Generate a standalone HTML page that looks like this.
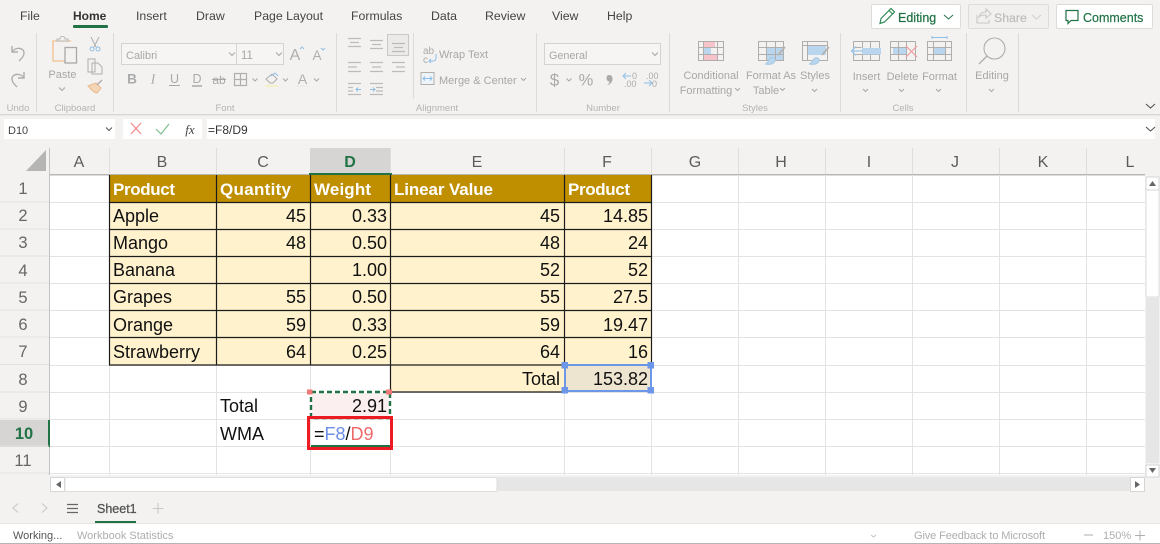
<!DOCTYPE html>
<html><head><meta charset="utf-8"><style>
html,body{margin:0;padding:0;width:1160px;height:544px;overflow:hidden;background:#fff}
svg{display:block;filter:blur(.35px)}
text{font-family:"Liberation Sans",sans-serif}
.r{font-size:11px;fill:#a9a7a5}
.g{font-size:9.5px;fill:#b5b3b1}
.t{font-size:12.3px;fill:#444}
.c{font-size:18px;fill:#111}
.h{font-size:17px;fill:#fff;font-weight:bold}
.ch{font-size:16px;fill:#5c5c5c;text-anchor:middle}
.rh{font-size:16.5px;fill:#666;text-anchor:middle}
.e{text-anchor:end}
.l{stroke:#b9b8b6;stroke-width:1;fill:none}
.i{stroke:#b0aeac;stroke-width:1;fill:none}
.a{stroke:#bdbbb9;stroke-width:1.200;fill:none}
.b{stroke:#8fbfe6;stroke-width:1;fill:none}
.v{stroke:#a9a7a5;stroke-width:1;fill:none}
</style></head><body>
<svg width="1160" height="544" viewBox="0 0 1160 544" xmlns="http://www.w3.org/2000/svg">
<rect width="1160" height="544" fill="#f3f2f1"/>

<!-- tabs -->
<text class="t" x="20" y="20">File</text>
<text class="t" x="73" y="20" style="fill:#333;font-weight:bold;font-size:12px">Home</text>
<rect x="73" y="25" width="35" height="3" rx="1" fill="#217346"/>
<text class="t" x="136" y="20">Insert</text>
<text class="t" x="196" y="20">Draw</text>
<text class="t" x="254" y="20">Page Layout</text>
<text class="t" x="351" y="20">Formulas</text>
<text class="t" x="431" y="20">Data</text>
<text class="t" x="485" y="20">Review</text>
<text class="t" x="552" y="20">View</text>
<text class="t" x="607" y="20">Help</text>

<!-- top buttons -->
<rect x="871.500" y="4.500" width="89" height="24" rx="1.500" fill="#fff" stroke="#dcdbda"/>
<path d="M880 23.500l1-5 10-10 3.500 3.500-10 10zM889 10.500l3.500 3.500" fill="none" stroke="#2e8b57" stroke-width="1.200"/>
<text x="898" y="22" style="font-size:12.500px;fill:#217346;stroke:#217346;stroke-width:.25">Editing</text>
<path d="M944 15l4.500 4 4.500-4" fill="none" stroke="#217346"/>
<rect x="968.500" y="4.500" width="80" height="24" rx="1.500" fill="#f1f0ef" stroke="#dddcdb"/>
<path d="M977 15v8h12v-3M979 17c1-4 4-5 7-5v-3l5 5-5 4v-3c-3 0-5 0-7 2z" fill="none" stroke="#c9c8c6" stroke-width="1.100"/>
<text x="994" y="22" style="font-size:12.300px;fill:#bdbcba;stroke:#bdbcba;stroke-width:.2">Share</text>
<path d="M1032 15l4.500 4 4.500-4" fill="none" stroke="#cfcecd"/>
<rect x="1056.500" y="4.500" width="96" height="24" rx="1.500" fill="#fff" stroke="#dcdbda"/>
<path d="M1066 10.500h12v10h-7l-3 3v-3h-2z" fill="none" stroke="#217346" stroke-width="1.200"/>
<text x="1083" y="22" style="font-size:12.500px;fill:#217346;stroke:#217346;stroke-width:.2">Comments</text>

<!-- group separators -->
<path class="l" style="stroke:#dcdbd9" d="M36.500 33v79M113.500 33v79M336.500 33v79M413.500 33v66M536.500 33v79M669.500 33v79M840.500 33v79M966.500 33v79M1018.500 33v79"/>

<!-- undo redo -->
<path class="i" style="stroke-width:1.400" d="M12 46v6h6M12 52c3-5 12-5 12 1 0 3-2 5-5 8"/>
<path class="i" style="stroke-width:1.400" d="M24 72v6h-6M24 78c-3-5-12-5-12 1 0 3 2 5 5 8"/>
<text class="g" x="18" y="111" text-anchor="middle">Undo</text>

<!-- clipboard -->
<path d="M71 41h-18v20h12" fill="none" stroke="#f1c99f" stroke-width="1.600"/>
<path d="M57 41v-2h3c0-3.500 5-3.500 5 0h3v2z" fill="#f3f2f1" stroke="#b9b8b6"/>
<rect x="65" y="47.500" width="11.500" height="15.500" fill="#f3f2f1" stroke="#aaa8a6" stroke-width="1.300"/>
<text class="r" x="62.500" y="78" text-anchor="middle">Paste</text>
<path class="v" d="M59 87.500l3 3 3-3"/>
<path class="i" d="M91 37l5 10M99 37l-5 10"/>
<circle class="b" cx="92" cy="49" r="2"/><circle class="b" cx="98" cy="49" r="2"/>
<path class="i" d="M88 59h7v13h-7zM92 73v-10h6l4 4v7h-10z"/>
<path d="M88 86l8-3 5 5-4 5c-3 0-6-4-9-7z" fill="#f4d5b5" stroke="#eab98c"/>
<path class="i" d="M97 85l5-5" style="stroke-width:1.500"/>
<text class="g" x="75" y="111" text-anchor="middle">Clipboard</text>

<!-- font -->
<rect x="121.500" y="43.500" width="162" height="21" fill="#f6f5f4" stroke="#d4d3d1"/>
<path d="M236.500 44v20" stroke="#d4d3d1"/>
<text class="r" x="126" y="59" style="font-size:11px">Calibri</text>
<text class="r" x="241" y="59" style="font-size:11.500px">11</text>
<path class="v" d="M229 52.500l3 3 3-3M276 52.500l3 3 3-3"/>
<text x="295" y="60" text-anchor="middle" style="font-size:16px;fill:#b0aeac">A</text>
<path class="b" d="M300 49l2-2 2 2"/>
<text x="317" y="60" text-anchor="middle" style="font-size:13.500px;fill:#b0aeac">A</text>
<path class="b" d="M321 48l2 2 2-2"/>
<text x="132" y="83.500" text-anchor="middle" style="font-size:13.500px;font-weight:bold;fill:#aaa">B</text>
<text x="153" y="83.500" text-anchor="middle" style="font-size:13.500px;font-style:italic;font-family:'Liberation Serif';fill:#aaa">I</text>
<text x="174.500" y="83" text-anchor="middle" style="font-size:12.500px;fill:#aaa">U</text><path class="v" d="M169 85.500h11"/>
<text x="197" y="83" text-anchor="middle" style="font-size:12.500px;fill:#aaa">D</text><path d="M192 86h10" stroke="#bbb" stroke-width="2"/>
<text x="219" y="84" text-anchor="middle" style="font-size:12px;fill:#aaa">ab</text><path class="v" d="M212 79.500h14"/>
<path class="i" style="stroke-width:1.200" d="M234.500 73.500h12v12h-12zM240.500 73.500v12M234.500 79.500h12"/>
<path class="v" d="M252.500 78.500l2.500 2.500 2.500-2.500M283 78.500l2.500 2.500 2.500-2.500M314 78.500l2.500 2.500 2.500-2.500"/>
<path class="i" d="M266 79l6-5 5 5-4 4h-3z"/>
<path class="b" d="M271 76l4-3 3 3"/>
<path d="M265 86h13" stroke="#f6efc5" stroke-width="2"/>
<text x="302.500" y="84" text-anchor="middle" style="font-size:14px;fill:#b0aeac">A</text>
<path d="M295 86h14" stroke="#ededeb" stroke-width="2"/>
<text class="g" x="225" y="111" text-anchor="middle">Font</text>

<!-- alignment -->
<rect x="387.500" y="34.500" width="21" height="21" fill="#ebeae8" stroke="#c9c8c6"/>
<path class="a" d="M348 38.500h13M350 42.500h9M348 46.500h13M370 40.500h13M372 44.500h9M370 48.500h13M392 43.500h13M394 47.500h9M392 51.500h13M348 62.500h13M348 67h9M348 71.500h13M370 62.500h13M372 67h9M370 71.500h13M392 62.500h13M396 67h9M392 71.500h13M348 83.500h13M348 94.500h13M370 83.500h13M370 94.500h13M348 87.500h5M348 91h5M376 87.500h7M376 91h7"/>
<path class="b" d="M361 89.500h-5M358 87.500l-2 2 2 2M370 89.500h5M373 87.500l2 2-2 2"/>
<text x="423" y="54" style="font-size:10px;fill:#aaa">ab</text>
<text x="423" y="63" style="font-size:10px;fill:#aaa">c</text>
<path class="b" d="M436 54v4c0 2-1 3-3 3h-4M431 59l-2 2 2 2"/>
<text class="r" x="439" y="58">Wrap Text</text>
<rect x="421" y="72.500" width="13" height="12" fill="#eef4fa" stroke="#b0aeac"/>
<path class="b" d="M423 78.500h9M425 76.500l-2 2 2 2M430 76.500l2 2-2 2"/>
<text class="r" x="439" y="84">Merge &amp; Center</text>
<path class="v" d="M521 78l2.500 2.500 2.500-2.500"/>
<text class="g" x="437" y="111" text-anchor="middle">Alignment</text>

<!-- number -->
<rect x="544.500" y="43.500" width="116" height="21" fill="#f6f5f4" stroke="#d4d3d1"/>
<text class="r" x="549" y="59" style="font-size:10.800px">General</text>
<path class="v" d="M652 52.500l3 3 3-3"/>
<text x="554.500" y="85.500" text-anchor="middle" style="font-size:17px;fill:#aaa">$</text>
<path class="v" d="M566.500 78.500l2.500 2.500 2.500-2.500"/>
<text x="586" y="85.500" text-anchor="middle" style="font-size:16.500px;fill:#aaa">%</text>
<path d="M609 75c3 0 3.500 2 3.500 4 0 3-2.500 5.500-5.500 6.500 1.500-1.500 2.500-2.500 2.500-4-1.500 0-3-1-3-3.200 0-2 1-3.300 2.500-3.300z" fill="#aaa"/>
<text x="632" y="79" style="font-size:9px;fill:#aaa">0</text>
<text x="624" y="87" style="font-size:9px;fill:#aaa">.00</text>
<path class="b" d="M631 76h-8M626 73l-3 3 3 3"/>
<text x="646" y="79" style="font-size:9px;fill:#aaa">.00</text>
<text x="652" y="87" style="font-size:9px;fill:#aaa">0</text>
<path class="b" d="M644 83h8M649 80l3 3-3 3"/>
<text class="g" x="603" y="111" text-anchor="middle">Number</text>

<!-- styles -->
<rect x="703" y="41" width="12" height="6.500" fill="#f6c3ca"/><rect x="703" y="47.500" width="8" height="6.500" fill="#b9d6ee"/><rect x="703" y="54" width="14" height="6.500" fill="#f6c3ca"/>
<path class="i" d="M698.500 41.500h25v19h-25zM698.500 47.500h25M698.500 54.500h25M703.500 41.500v19M717.500 41.500v19"/>
<text class="r" x="711" y="79" text-anchor="middle">Conditional</text>
<text class="r" x="706" y="94" text-anchor="middle">Formatting</text>
<path class="v" d="M735 88l2.500 2.500 2.500-2.500"/>
<rect x="766" y="47.500" width="17" height="13" fill="#b9d6ee"/>
<path class="i" d="M758.500 41.500h25v19h-25zM758.500 47.500h25M758.500 54.500h25M766.500 41.500v19M775.500 41.500v19"/>
<path d="M785 47l-7 8" stroke="#b5b3b1" stroke-width="1.800"/><path d="M765 64c3 0 3-4 6-6 3-1 5 1 4 3-1 3-5 4-10 3z" fill="#b9d6ee" stroke="#a7c8e2"/>
<text class="r" x="771" y="79" text-anchor="middle">Format As</text>
<text class="r" x="766" y="94" text-anchor="middle">Table</text>
<path class="v" d="M780 88l2.500 2.500 2.500-2.500"/>
<rect x="807" y="45" width="19" height="10" fill="#b9d6ee"/>
<path class="i" d="M802.500 41.500h25v19h-25zM802.500 45.500h25M807.500 41.500v19"/>
<path d="M829 47l-7 8" stroke="#b5b3b1" stroke-width="1.800"/><path d="M809 64c3 0 3-4 6-6 3-1 5 1 4 3-1 3-5 4-10 3z" fill="#b9d6ee" stroke="#a7c8e2"/>
<text class="r" x="815" y="79" text-anchor="middle">Styles</text>
<path class="v" d="M812 89l2.500 2.500 2.500-2.500"/>
<text class="g" x="755" y="111" text-anchor="middle">Styles</text>

<!-- cells -->
<path class="i" d="M853.500 41.500h26v19h-26zM853.500 47.500h8M853.500 54.500h26M862.500 41.500v19M870.500 41.500v19"/>
<rect x="862" y="48" width="19" height="6.500" fill="#b9d6ee"/>
<path d="M852 51h11M856 46.500l-4.500 4.500 4.500 4.500" fill="none" stroke="#9cc7ea" stroke-width="1.300"/>
<text class="r" x="866.500" y="80" text-anchor="middle">Insert</text>
<path class="v" d="M863 89l2.500 2.500 2.500-2.500"/>
<rect x="893" y="48" width="14" height="6" fill="#b9d6ee"/>
<path class="i" d="M890.500 41.500h25v19h-25zM890.500 47.500h16M890.500 54.500h16M898.500 41.500v19M906.500 41.500v19"/>
<path d="M906 46l11 11M917 46l-11 11" stroke="#f09a9a" stroke-width="1.200"/>
<text class="r" x="902.500" y="80" text-anchor="middle">Delete</text>
<path class="v" d="M899 89l2.500 2.500 2.500-2.500"/>
<rect x="933" y="47.500" width="13" height="7" fill="#b9d6ee"/>
<path class="i" d="M927.500 41.500h24v19h-24zM927.500 47.500h24M927.500 54.500h24M933.500 41.500v19M945.500 41.500v19"/>
<path class="b" d="M932 37.500h15M932 36v3M947 36v3"/>
<text class="r" x="939.500" y="80" text-anchor="middle">Format</text>
<path class="v" d="M936 89l2.500 2.500 2.500-2.500"/>
<text class="g" x="903" y="111" text-anchor="middle">Cells</text>

<!-- editing -->
<circle cx="994.500" cy="48.500" r="10.500" fill="none" stroke="#b0aeac" stroke-width="1.100"/>
<path d="M987 56l-8 8" stroke="#b0aeac" stroke-width="1.300"/>
<text class="r" x="992" y="79" text-anchor="middle">Editing</text>
<path class="v" d="M989 89l2.500 2.500 2.500-2.500"/>
<path d="M1146 104l4.500 4 4.500-4" fill="none" stroke="#555" stroke-width="1.100"/>

<!-- ribbon shadow -->
<rect y="114" width="1160" height="1" fill="#d8d7d5"/>
<rect y="115" width="1160" height="1" fill="#e9e8e6"/>

<!-- formula bar -->
<rect x="4" y="119" width="111" height="20" fill="#fff"/>
<text x="8" y="134" style="font-size:11px;fill:#444">D10</text>
<path d="M106 127.500l3 3 3-3" fill="none" stroke="#555"/>
<rect x="123" y="119" width="79" height="20" fill="#fff"/>
<path d="M131 123l10 11M141 123l-10 11" stroke="#ef8a8a" stroke-width="1.200"/>
<path d="M156 129l5 5 8-10" fill="none" stroke="#7cc08e" stroke-width="1.200"/>
<text x="190" y="134" text-anchor="middle" style="font-size:13px;font-style:italic;font-family:'Liberation Serif';fill:#444">fx</text>
<rect x="207" y="119" width="948" height="20" fill="#fff"/>
<text x="208" y="134" style="font-size:12px;fill:#333">=F8/D9</text>
<path d="M1146 127l4.500 4 4.500-4" fill="none" stroke="#555" stroke-width="1.100"/>

<!-- sheet -->
<rect x="50" y="175" width="1095" height="300" fill="#fff"/>
<rect x="310" y="148" width="81" height="26" fill="#d6d5d3"/>
<path d="M26 171l20-21v21z" fill="#b5b5b3"/>
<path stroke="#dfdedc" d="M49.500 148v26M109.500 148v26M216.500 148v26M390.500 148v26M564.500 148v26M651.500 148v26M738.500 148v26M825.500 148v26M912.500 148v26M999.500 148v26M1086.500 148v26"/>
<text class="ch" x="79" y="167">A</text>
<text class="ch" x="162" y="167">B</text>
<text class="ch" x="263" y="167">C</text>
<text class="ch" x="350" y="167" style="fill:#217346;font-weight:bold">D</text>
<text class="ch" x="477" y="167">E</text>
<text class="ch" x="607" y="167">F</text>
<text class="ch" x="695" y="167">G</text>
<text class="ch" x="781" y="167">H</text>
<text class="ch" x="869" y="167">I</text>
<text class="ch" x="955" y="167">J</text>
<text class="ch" x="1043" y="167">K</text>
<text class="ch" x="1130" y="167">L</text>
<rect x="49" y="174" width="1096" height="1.500" fill="#b8b7b6"/>
<rect x="309" y="173" width="83" height="2" fill="#217346"/>

<!-- row headers -->
<rect x="0" y="420" width="49" height="27" fill="#d6d5d3"/>
<rect x="48" y="420" width="2" height="27" fill="#217346"/>
<rect x="49" y="148" width="1" height="272" fill="#c3c2c0"/><rect x="49" y="447" width="1" height="28" fill="#c3c2c0"/>
<path stroke="#e2e1df" d="M0 202h49M0 229h49M0 256h49M0 283h49M0 310h49M0 337h49M0 364.500h49M0 392h49M0 419h49M0 446h49M0 473h49"/>
<text class="rh" x="23" y="194">1</text>
<text class="rh" x="23" y="221">2</text>
<text class="rh" x="23" y="248">3</text>
<text class="rh" x="23" y="276">4</text>
<text class="rh" x="23" y="303">5</text>
<text class="rh" x="23" y="330">6</text>
<text class="rh" x="23" y="357">7</text>
<text class="rh" x="23" y="385">8</text>
<text class="rh" x="23" y="412">9</text>
<text class="rh" x="24" y="439" style="fill:#217346;font-weight:bold">10</text>
<text class="rh" x="23" y="466">11</text>

<!-- gridlines -->
<path stroke="#e3e3e3" d="M50 202.500h1095M50 229.500h1095M50 256.500h1095M50 283.500h1095M50 310.500h1095M50 337.500h1095M50 365.500h1095M50 392.500h1095M50 419.500h1095M50 446.500h1095M50 473.500h1095M109.500 175v300M216.500 175v300M310.500 175v300M390.500 175v300M564.500 175v300M651.500 175v300M738.500 175v300M825.500 175v300M912.500 175v300M999.500 175v300M1086.500 175v300"/>

<!-- table fills -->
<rect x="109" y="175" width="543" height="27" fill="#bf8f00"/>
<rect x="109" y="202" width="543" height="163" fill="#fff2cc"/>
<rect x="391" y="365" width="261" height="27" fill="#fff2cc"/>
<rect x="565" y="365" width="87" height="27" fill="#ede5d0"/>
<rect x="310" y="393" width="81" height="26" fill="#fcefef"/>
<path stroke="#1c1c1c" stroke-width="1.200" fill="none" d="M109.500 175v190M216.500 175v190M310.500 175v190M390.500 175v217M564.500 175v190M651.500 175v190M109 202.500h543M109 229.500h543M109 256.500h543M109 283.500h543M109 310.500h543M109 337.500h543M109 365h543M391 392h174"/>

<!-- table text -->
<text class="h" x="113" y="195" textLength="62">Product</text>
<text class="h" x="220" y="195" textLength="71">Quantity</text>
<text class="h" x="314" y="195" textLength="57">Weight</text>
<text class="h" x="394" y="195" textLength="99">Linear Value</text>
<text class="h" x="568" y="195" textLength="62">Product</text>

<text class="c" x="113" y="222">Apple</text><text class="c e" x="306" y="222">45</text><text class="c e" x="387" y="222">0.33</text><text class="c e" x="560" y="222">45</text><text class="c e" x="648" y="222">14.85</text>
<text class="c" x="113" y="249">Mango</text><text class="c e" x="306" y="249">48</text><text class="c e" x="387" y="249">0.50</text><text class="c e" x="560" y="249">48</text><text class="c e" x="648" y="249">24</text>
<text class="c" x="113" y="276">Banana</text><text class="c e" x="387" y="276">1.00</text><text class="c e" x="560" y="276">52</text><text class="c e" x="648" y="276">52</text>
<text class="c" x="113" y="303">Grapes</text><text class="c e" x="306" y="303">55</text><text class="c e" x="387" y="303">0.50</text><text class="c e" x="560" y="303">55</text><text class="c e" x="648" y="303">27.5</text>
<text class="c" x="113" y="331">Orange</text><text class="c e" x="306" y="331">59</text><text class="c e" x="387" y="331">0.33</text><text class="c e" x="560" y="331">59</text><text class="c e" x="648" y="331">19.47</text>
<text class="c" x="113" y="358">Strawberry</text><text class="c e" x="306" y="358">64</text><text class="c e" x="387" y="358">0.25</text><text class="c e" x="560" y="358">64</text><text class="c e" x="648" y="358">16</text>
<text class="c e" x="560" y="385">Total</text><text class="c e" x="648" y="385">153.82</text>
<text class="c" x="220" y="412">Total</text><text class="c e" x="387" y="412">2.91</text>
<text class="c" x="220" y="440">WMA</text>
<text class="c" x="314" y="440">=<tspan fill="#6b8ee8">F8</tspan>/<tspan fill="#ee6a6a">D9</tspan></text>

<!-- F8 selection -->
<rect x="565" y="365" width="86" height="26" fill="none" stroke="#6c97e8" stroke-width="2"/>
<g fill="#6c97e8"><rect x="561.500" y="362" width="6.500" height="6.500"/><rect x="647.500" y="362" width="6.500" height="6.500"/><rect x="561.500" y="387" width="6.500" height="6.500"/><rect x="647.500" y="387" width="6.500" height="6.500"/></g>

<!-- D9 marching ants -->
<rect x="311" y="392" width="79" height="26" fill="none" stroke="#fff" stroke-width="2.400"/>
<rect x="311" y="392" width="79" height="26" fill="none" stroke="#217346" stroke-width="2.400" stroke-dasharray="5 3"/>
<g fill="#f07878"><rect x="307" y="389.500" width="5.500" height="5"/><rect x="386" y="389.500" width="6" height="5"/></g>

<!-- D10 red box -->
<rect x="311" y="445" width="80" height="2" fill="#217346"/>
<rect x="308.500" y="417.500" width="83" height="31" fill="none" stroke="#ed1c24" stroke-width="3"/>

<!-- vertical scrollbar -->
<rect x="1145" y="175" width="15" height="302" fill="#f3f2f1"/>
<rect x="1146" y="298" width="13" height="165" fill="#e6e6e6"/>
<rect x="1146" y="177" width="13" height="120" fill="#fff" stroke="#dedede"/>
<rect x="1146" y="177" width="13" height="13" fill="#fff" stroke="#d5d5d5"/>
<path d="M1149 186l3.500-5 3.500 5z" fill="#666"/>
<rect x="1146" y="465" width="13" height="12" fill="#fff" stroke="#d5d5d5"/>
<path d="M1149 468h7l-3.500 5z" fill="#666"/>

<!-- horizontal scrollbar -->
<rect x="50" y="476" width="1095" height="1" fill="#f3f2f1"/>
<rect x="50" y="477" width="1095" height="14" fill="#e6e6e6"/>
<rect x="50.500" y="477.500" width="14" height="14" fill="#fff" stroke="#d5d5d5"/>
<path d="M61 481v7l-5-3.500z" fill="#666"/>
<rect x="65" y="477.500" width="432" height="14" fill="#fff" stroke="#dedede"/>
<rect x="1130.500" y="477.500" width="14" height="14" fill="#fff" stroke="#d5d5d5"/>
<path d="M1135 481v7l5-3.500z" fill="#666"/>

<!-- tabs bottom -->
<path d="M18 503.500l-5 4.500 5 4.500" fill="none" stroke="#c9c8c6" stroke-width="1.100"/>
<path d="M42 503.500l5 4.500-5 4.500" fill="none" stroke="#c9c8c6" stroke-width="1.100"/>
<path d="M67 504.500h11M67 508.500h11M67 512.500h11" stroke="#666" stroke-width="1.200"/>
<text x="97" y="513" style="font-size:12.500px;fill:#555;stroke:#555;stroke-width:.3">Sheet1</text>
<rect x="95" y="521" width="41" height="2.500" fill="#217346"/>
<path d="M158 503v11M152.500 508.500h11" stroke="#c9c8c6" stroke-width="1.100"/>

<!-- status bar -->
<rect y="524" width="1160" height="19" fill="#fff"/>
<rect y="523" width="1160" height="1" fill="#e6e5e3"/>
<rect y="543" width="1160" height="1" fill="#b5b5b5"/>
<text x="13" y="539" style="font-size:11px;fill:#555">Working...</text>
<text x="77" y="539" style="font-size:11px;fill:#b0aeac">Workbook Statistics</text>
<path d="M871 535l2.500 2 2.500-2" fill="none" stroke="#c4c3c1"/>
<text x="914" y="539" style="font-size:11px;fill:#b0aeac" textLength="131">Give Feedback to Microsoft</text>
<path d="M1084 535h9" stroke="#b0aeac"/>
<text x="1103" y="539" style="font-size:11px;fill:#b0aeac">150%</text>
<path d="M1135 535.500h10M1140 530.500v10" stroke="#b0aeac"/>
</svg>
</body></html>
